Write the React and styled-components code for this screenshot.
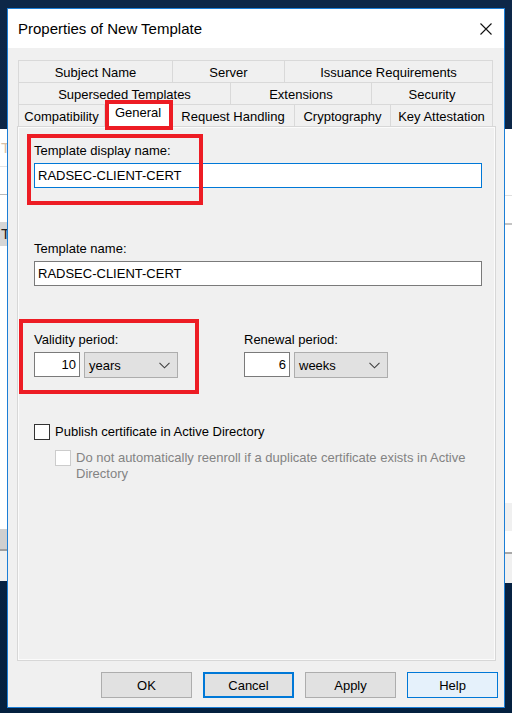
import React from "react"
import styled, { createGlobalStyle, css } from "styled-components"

const GlobalStyle = createGlobalStyle`
  html, body {
    margin: 0;
    padding: 0;
    background: #0b2545;
  }
  body {
    font-family: "Liberation Sans", Arial, sans-serif;
    font-size: 13px;
    color: #000;
  }
`

const topTabs = [
  [
    { label: "Subject Name", w: 155 },
    { label: "Server", w: 112 },
    { label: "Issuance Requirements", w: 208 },
  ],
  [
    { label: "Superseded Templates", w: 213 },
    { label: "Extensions", w: 141 },
    { label: "Security", w: 121 },
  ],
  [
    { label: "Compatibility", w: 87 },
    { label: "General", w: 67, active: true },
    { label: "Request Handling", w: 123 },
    { label: "Cryptography", w: 96 },
    { label: "Key Attestation", w: 102 },
  ],
]

const leftStrips = [
  { h: 37, bg: "#fff", text: "T", faint: true },
  { h: 1, bg: "#e3e3e3" },
  { h: 27, bg: "#fff" },
  { h: 1, bg: "#b9b9b9" },
  { h: 27, bg: "#fff" },
  { h: 24, bg: "#d6d6d6", text: "T" },
  { h: 283, bg: "#fff" },
  { h: 20, bg: "#cfcfcf" },
  { h: 2, bg: "#9f9f9f" },
  { h: 30, bg: "#f0f0f0" },
]

const rightStrips = [
  { h: 66, bg: "#fff" },
  { h: 1, bg: "#e0e0e0" },
  { h: 27, bg: "#fff" },
  { h: 2, bg: "#c4c4c4" },
  { h: 278, bg: "#fff" },
  { h: 28, bg: "#f0f0f0" },
  { h: 21, bg: "#fff" },
  { h: 2, bg: "#a8a8a8" },
  { h: 29, bg: "#f0f0f0" },
]

function Chevron() {
  return (
    <svg width="11" height="7" viewBox="0 0 11 7">
      <path d="M0.5 0.8 L5.5 5.8 L10.5 0.8" fill="none" stroke="#404040" strokeWidth="1.1" />
    </svg>
  )
}

function PeriodField({ label, value, unit }) {
  return (
    <Group>
      <Label>{label}</Label>
      <FieldRow>
        <NumberBox>{value}</NumberBox>
        <Select>
          <span>{unit}</span>
          <Chevron />
        </Select>
      </FieldRow>
    </Group>
  )
}

export default function App() {
  return (
    <>
      <GlobalStyle />
      <Desktop>
        <BackWindow left={0} top={129}>
          {leftStrips.map((s, i) => (
            <Strip key={i} h={s.h} bg={s.bg} faint={s.faint}>{s.text}</Strip>
          ))}
        </BackWindow>
        <BackWindow left={505} top={129}>
          {rightStrips.map((s, i) => (
            <Strip key={i} h={s.h} bg={s.bg} />
          ))}
        </BackWindow>

        <Dialog>
          <TitleBar>
            <Title>Properties of New Template</Title>
            <CloseButton>
              <svg width="12" height="12" viewBox="0 0 12 12">
                <path d="M0.5 0.5 L11.5 11.5 M11.5 0.5 L0.5 11.5" stroke="#111" strokeWidth="1.1" />
              </svg>
            </CloseButton>
          </TitleBar>

          <Body>
            <TabStrip>
              {topTabs.map((row, r) => (
                <TabRow key={r}>
                  {row.map((t) => (
                    <Tab key={t.label} w={t.w} active={t.active}>{t.label}</Tab>
                  ))}
                </TabRow>
              ))}
            </TabStrip>

            <Panel>
              <Label>Template display name:</Label>
              <TextBox focused>RADSEC-CLIENT-CERT</TextBox>

              <Label gap={53}>Template name:</Label>
              <TextBox>RADSEC-CLIENT-CERT</TextBox>

              <PeriodRow>
                <PeriodField label="Validity period:" value="10" unit="years" />
                <PeriodField label="Renewal period:" value="6" unit="weeks" />
              </PeriodRow>

              <CheckRow>
                <CheckBox />
                <CheckText>Publish certificate in Active Directory</CheckText>
              </CheckRow>
              <CheckRow indent disabled>
                <CheckBox disabled />
                <CheckText>Do not automatically reenroll if a duplicate certificate exists in Active Directory</CheckText>
              </CheckRow>

              <Highlight style={{ left: 9, top: 7, width: 176, height: 71 }} />
              <Highlight style={{ left: 1, top: 192, width: 180, height: 75 }} />
            </Panel>

            <ButtonRow>
              <Button>OK</Button>
              <Button variant="default">Cancel</Button>
              <Button>Apply</Button>
              <Button variant="hover">Help</Button>
            </ButtonRow>
          </Body>
        </Dialog>
      </Desktop>
    </>
  )
}

const Desktop = styled.div`
    position: relative;
    width: 512px;
    height: 713px;
    overflow: hidden;
    background: linear-gradient(180deg, #0d2748 0%, #0a2446 60%, #04203f 100%);
`

const BackWindow = styled.div`
    position: absolute;
    left: ${({left}) => left}px;
    top: ${({top}) => top}px;
    width: 7px;
    display: flex;
    flex-direction: column;
`

const Strip = styled.div`
    height: ${({h}) => h}px;
    background: ${({bg}) => bg};
    font-size: 15px;
    line-height: ${({h}) => h}px;
    padding-left: 1px;
    color: ${({faint}) => faint ? "#d8c0a8" : "#222"};
    overflow: hidden;
`

const Dialog = styled.div`
    position: absolute;
    left: 7px;
    top: 8px;
    width: 498px;
    height: 700px;
    box-sizing: border-box;
    border: 1px solid #1c7ed6;
    background: #f0f0f0;
    display: flex;
    flex-direction: column;
`

const TitleBar = styled.div`
    height: 39px;
    background: #fff;
    display: flex;
    align-items: center;
    justify-content: space-between;
    padding-left: 10px;
`

const Title = styled.div`
    font-size: 15px;
    color: #000;
`

const CloseButton = styled.div`
    width: 36px;
    height: 39px;
    display: flex;
    align-items: center;
    justify-content: center;
`

const Body = styled.div`
    flex: 1;
    display: flex;
    flex-direction: column;
    padding: 12px 8px 9px 9px;
`

const TabStrip = styled.div`
    display: flex;
    flex-direction: column;
    margin: 0 2px 0 1px;
`

const TabRow = styled.div`
    display: flex;
    height: 22px;
`

const Tab = styled.div`
    position: relative;
    width: ${({w}) => w}px;
    box-sizing: border-box;
    border-top: 1px solid #d9d9d9;
    border-right: 1px solid #d9d9d9;
    background: #f0f0f0;
    display: flex;
    align-items: center;
    justify-content: center;
    padding-top: 1px;
    white-space: nowrap;
    &:first-child {
        border-left: 1px solid #d9d9d9;
    }
    ${({active}) => active && css`
        background: #fff;
        z-index: 1;
        padding-top: 0;
        padding-bottom: 4px;
        height: 24px;
        margin-top: -2px;
        &::after {
            content: "";
            position: absolute;
            top: -3px;
            left: 0;
            right: -2px;
            bottom: -4px;
            border: 4px solid #ed1c24;
        }
    `}
`

const Panel = styled.div`
    position: relative;
    flex: 1;
    border: 1px solid #d7d7d7;
    box-shadow: inset 0 0 0 1px #fbfbfb;
    padding: 16px 13px 0 16px;
    display: flex;
    flex-direction: column;
    align-items: flex-start;
`

const Label = styled.div`
    line-height: 15px;
    margin-top: ${({gap}) => gap || 0}px;
    white-space: nowrap;
`

const TextBox = styled.div`
    margin-top: 5px;
    width: 448px;
    height: 25px;
    box-sizing: border-box;
    background: #fff;
    border: 1px solid ${({focused}) => focused ? "#0078d7" : "#7a7a7a"};
    padding-left: 3px;
    display: flex;
    align-items: center;
`

const PeriodRow = styled.div`
    display: flex;
    margin-top: 46px;
`

const Group = styled.div`
    width: 210px;
    display: flex;
    flex-direction: column;
`

const FieldRow = styled.div`
    display: flex;
    gap: 4px;
    margin-top: 5px;
`

const NumberBox = styled.div`
    width: 46px;
    height: 25px;
    box-sizing: border-box;
    background: #fff;
    border: 1px solid #7a7a7a;
    padding-right: 3px;
    display: flex;
    align-items: center;
    justify-content: flex-end;
`

const Select = styled.div`
    width: 94px;
    height: 26px;
    box-sizing: border-box;
    background: #e1e1e1;
    border: 1px solid #adadad;
    padding: 0 7px 0 4px;
    display: flex;
    align-items: center;
    justify-content: space-between;
`

const CheckRow = styled.div`
    display: flex;
    align-items: flex-start;
    gap: 5px;
    margin-top: ${({indent}) => indent ? 10 : 46}px;
    margin-left: ${({indent}) => indent ? 21 : 0}px;
    width: ${({indent}) => indent ? 420 : 440}px;
    color: ${({disabled}) => disabled ? "#838383" : "#000"};
`

const CheckBox = styled.div`
    flex: none;
    width: 16px;
    height: 16px;
    box-sizing: border-box;
    background: #fff;
    border: 1px solid ${({disabled}) => disabled ? "#cccccc" : "#333"};
`

const CheckText = styled.div`
    line-height: 16px;
`

const Highlight = styled.div`
    position: absolute;
    box-sizing: border-box;
    border: 4px solid #ed1c24;
    pointer-events: none;
`

const ButtonRow = styled.div`
    display: flex;
    justify-content: flex-end;
    gap: 11px;
    margin-top: 11px;
    margin-right: -2px;
`

const Button = styled.div`
    width: 91px;
    height: 26px;
    box-sizing: border-box;
    display: flex;
    align-items: center;
    justify-content: center;
    background: ${({variant}) => variant === "hover" ? "#e5f1fb" : "#e1e1e1"};
    border: ${({variant}) => variant === "default" ? "2px solid #0078d7" : variant === "hover" ? "1px solid #0078d7" : "1px solid #adadad"};
`
